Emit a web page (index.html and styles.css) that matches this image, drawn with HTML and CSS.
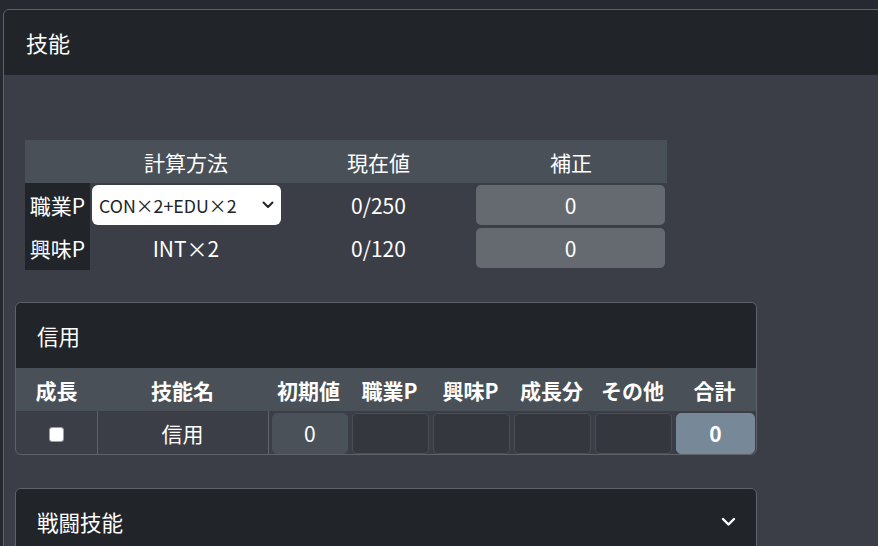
FILE: index.html
```html
<!DOCTYPE html>
<html lang="ja">
<head>
<meta charset="utf-8">
<title>技能</title>
<link rel="stylesheet" href="styles.css">
</head>
<body>
<div class="card outer">
  <div class="card-header">技能</div>
  <div class="card-body">
    <table class="points">
      <colgroup>
        <col class="c-label"><col class="c-method"><col class="c-current"><col class="c-adjust">
      </colgroup>
      <thead>
        <tr><th></th><th>計算方法</th><th>現在値</th><th>補正</th></tr>
      </thead>
      <tbody>
        <tr class="row-a">
          <th class="label">職業P</th>
          <td><div class="select"><span>CON×2+EDU×2</span><svg width="12" height="8" viewBox="0 0 12 8"><path d="M1.5 1.5 L6 6 L10.5 1.5" fill="none" stroke="#212529" stroke-width="2" stroke-linecap="round" stroke-linejoin="round"/></svg></div></td>
          <td>0/250</td>
          <td><div class="num-box">0</div></td>
        </tr>
        <tr class="row-b">
          <th class="label">興味P</th>
          <td>INT×2</td>
          <td>0/120</td>
          <td><div class="num-box">0</div></td>
        </tr>
      </tbody>
    </table>

    <div class="card skill-card">
      <div class="card-header sub">信用</div>
      <table class="skills">
        <colgroup>
          <col class="s-grow"><col class="s-name"><col class="s-num"><col class="s-num"><col class="s-num"><col class="s-num"><col class="s-num"><col class="s-total">
        </colgroup>
        <thead>
          <tr><th>成長</th><th>技能名</th><th>初期値</th><th>職業P</th><th>興味P</th><th>成長分</th><th>その他</th><th>合計</th></tr>
        </thead>
        <tbody>
          <tr>
            <td class="sep"><span class="check"></span></td>
            <td class="sep">信用</td>
            <td class="box-cell"><div class="box base">0</div></td>
            <td class="box-cell"><div class="box empty"></div></td>
            <td class="box-cell"><div class="box empty"></div></td>
            <td class="box-cell"><div class="box empty"></div></td>
            <td class="box-cell"><div class="box empty"></div></td>
            <td class="box-cell"><div class="box total">0</div></td>
          </tr>
        </tbody>
      </table>
    </div>

    <div class="card skill-card second">
      <div class="card-header sub collapse">
        <span>戦闘技能</span>
        <svg width="15" height="10" viewBox="0 0 15 10"><path d="M2 2 L7.5 7.5 L13 2" fill="none" stroke="#ffffff" stroke-width="2.4" stroke-linecap="round" stroke-linejoin="round"/></svg>
      </div>
      <div class="collapsed-body"></div>
    </div>
  </div>
</div>
</body>
</html>
```

FILE: styles.css
```css
html, body {
  margin: 0;
  padding: 0;
  overflow: hidden;
}
body {
  background: #26292f;
  font-family: "Noto Sans CJK JP", "Noto Sans", sans-serif;
  color: #ffffff;
  width: 878px;
  height: 546px;
}
.card {
  border: 1px solid #5f6268;
  border-radius: 6px;
  overflow: hidden;
  box-sizing: border-box;
}
.outer {
  margin: 9px 0 0 3px;
  width: 920px;
  height: 560px;
  background: #3b3e46;
}
.card-header {
  background: #212529;
  height: 65px;
  line-height: 65px;
  font-size: 22px;
  padding-left: 22px;
}
.card-body {
  padding: 65px 0 0 11px;
}

/* points table */
.points {
  border-collapse: collapse;
  table-layout: fixed;
  width: 642px;
  margin-left: 10px;
  font-size: 21px;
}
.c-label { width: 65px; }
.c-method { width: 192px; }
.c-current { width: 193px; }
.c-adjust { width: 192px; }
.points th, .points td {
  padding: 0;
  text-align: center;
  font-weight: normal;
  line-height: 28px;
}
.points thead tr { height: 43px; }
.points thead th { background: #495057; }
.points .row-a { height: 43px; }
.points .row-b { height: 44px; }
.points .label {
  background: #212529;
  white-space: nowrap;
}
.select {
  display: flex;
  align-items: center;
  justify-content: space-between;
  box-sizing: border-box;
  width: 189px;
  height: 40px;
  margin-left: 2px;
  padding: 0 7px 0 7px;
  background: #ffffff;
  border-radius: 6px;
  color: #212529;
  font-size: 17.8px;
}
.num-box {
  width: 189px;
  height: 40px;
  line-height: 40px;
  margin-left: 1px;
  background: #656a71;
  border-radius: 5px;
  color: #ffffff;
}

/* skill cards */
.skill-card {
  width: 742px;
  margin-top: 32px;
}
.skill-card.second {
  margin-top: 33px;
}
.card-header.sub {
  padding-left: 21px;
  font-size: 21.5px;
}
.collapse {
  display: flex;
  align-items: center;
  justify-content: space-between;
  padding-right: 20px;
}
.collapse svg { margin-top: 1px; }
.collapsed-body {
  height: 40px;
  background: #212529;
}
.skills {
  border-collapse: collapse;
  table-layout: fixed;
  width: 740px;
  font-size: 21px;
}
.s-grow { width: 81px; }
.s-name { width: 171px; }
.s-num { width: 81px; }
.s-total { width: 83px; }
.skills thead tr { height: 43px; }
.skills tbody tr { height: 43px; }
.skills th {
  background: #495057;
  padding: 0;
  font-weight: bold;
  line-height: 28px;
  white-space: nowrap;
}
.skills td {
  padding: 0;
  text-align: center;
  line-height: 28px;
}
.skills td.sep {
  border-right: 1px solid #5f6268;
}
.skills td.box-cell {
  padding: 1px 1px 0 3px;
}
.check {
  display: inline-block;
  width: 13px;
  height: 13px;
  background: #ffffff;
  border: 1px solid #9a9ea4;
  border-radius: 3px;
  vertical-align: middle;
  margin-top: -3px;
}
.box {
  box-sizing: border-box;
  height: 41px;
  line-height: 39px;
  border-radius: 5px;
  text-align: center;
}
.box.base {
  background: #4b5159;
  border: 1px solid #4b5159;
}
.box.empty {
  background: #34373d;
  border: 1px solid #4b4e55;
}
.box.total {
  background: #778899;
  border: 1px solid #778899;
  font-weight: bold;
}
```
